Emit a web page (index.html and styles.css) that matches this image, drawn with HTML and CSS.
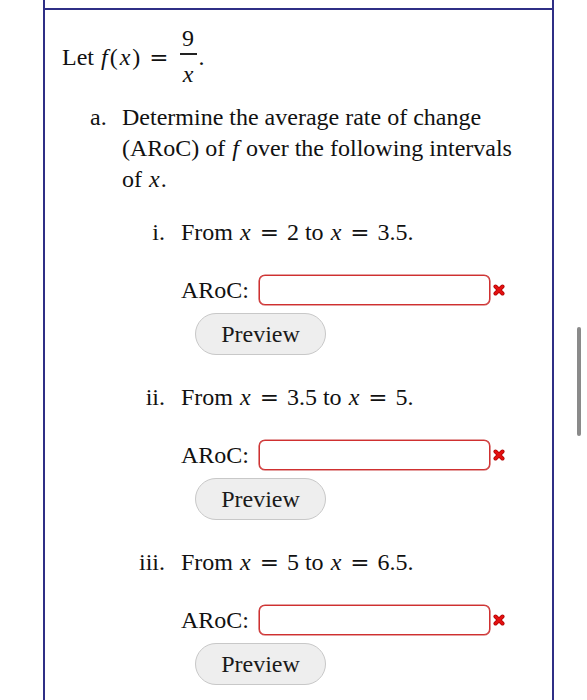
FILE: index.html
```html
<!DOCTYPE html>
<html>
<head>
<meta charset="utf-8">
<link rel="stylesheet" href="styles.css">
</head>
<body>
<div class="frame">
  <div class="strip"></div>
  <div class="content">
    <div class="intro">
      <span>Let&nbsp;</span><span class="mi">f</span><span class="mo">(</span><span class="mi">x</span><span class="mo">)</span><span class="rel">=</span><span class="frac"><span class="num">9</span><span class="bar"></span><span class="den mi">x</span></span><span>.</span>
    </div>
    <div class="part">
      <div class="label">a.</div>
      <div class="body">
        <div class="ptext">Determine the average rate of change (ARoC) of <span class="mi">f</span> over the following intervals of <span class="mi">x</span>.</div>

        <div class="item">
          <div class="iline"><span class="ilabel">i.</span><span>From&nbsp;<span class="mi">x</span><span class="rel">=</span>2 to&nbsp;<span class="mi">x</span><span class="rel">=</span>3.5.</span></div>
          <div class="answer"><span class="alabel">ARoC:</span><span class="input"></span><svg class="xmark" viewBox="0 0 12 12" width="12" height="12"><path d="M2.5 2.5 L9.5 9.5 M9.5 2.5 L2.5 9.5" stroke="#a00" stroke-width="4" stroke-linecap="round"/><path d="M2.5 2.5 L9.5 9.5 M9.5 2.5 L2.5 9.5" stroke="#e41010" stroke-width="2.6" stroke-linecap="round"/></svg></div>
          <div class="btnrow"><span class="btn">Preview</span></div>
        </div>

        <div class="item">
          <div class="iline"><span class="ilabel">ii.</span><span>From&nbsp;<span class="mi">x</span><span class="rel">=</span>3.5 to&nbsp;<span class="mi">x</span><span class="rel">=</span>5.</span></div>
          <div class="answer"><span class="alabel">ARoC:</span><span class="input"></span><svg class="xmark" viewBox="0 0 12 12" width="12" height="12"><path d="M2.5 2.5 L9.5 9.5 M9.5 2.5 L2.5 9.5" stroke="#a00" stroke-width="4" stroke-linecap="round"/><path d="M2.5 2.5 L9.5 9.5 M9.5 2.5 L2.5 9.5" stroke="#e41010" stroke-width="2.6" stroke-linecap="round"/></svg></div>
          <div class="btnrow"><span class="btn">Preview</span></div>
        </div>

        <div class="item">
          <div class="iline"><span class="ilabel">iii.</span><span>From&nbsp;<span class="mi">x</span><span class="rel">=</span>5 to&nbsp;<span class="mi">x</span><span class="rel">=</span>6.5.</span></div>
          <div class="answer"><span class="alabel">ARoC:</span><span class="input"></span><svg class="xmark" viewBox="0 0 12 12" width="12" height="12"><path d="M2.5 2.5 L9.5 9.5 M9.5 2.5 L2.5 9.5" stroke="#a00" stroke-width="4" stroke-linecap="round"/><path d="M2.5 2.5 L9.5 9.5 M9.5 2.5 L2.5 9.5" stroke="#e41010" stroke-width="2.6" stroke-linecap="round"/></svg></div>
          <div class="btnrow"><span class="btn">Preview</span></div>
        </div>
      </div>
    </div>
  </div>
</div>
<div class="scrollbar"></div>
</body>
</html>
```

FILE: styles.css
```css
html, body {
  margin: 0;
  padding: 0;
  background: #fff;
  overflow: hidden;
}
body {
  font-family: "Liberation Serif", "Times New Roman", serif;
  font-size: 24px;
  line-height: 31px;
  color: #111;
}
.frame {
  margin-left: 43px;
  width: 507px;
  height: 700px;
  border-left: 2px solid #2f2f86;
  border-right: 2px solid #2f2f86;
}
.strip {
  height: 8px;
  border-bottom: 2px solid #2f2f86;
}
.content {
  padding-left: 17px;
}
.mi {
  font-style: italic;
  padding: 0 1px;
}
.mo {
  padding: 0 1px;
}
.rel {
  font-family: "DejaVu Serif", serif;
  font-size: 23px;
  padding: 0 8px;
}
.intro {
  margin-top: 17px;
  height: 60px;
  display: flex;
  align-items: center;
  white-space: nowrap;
}
.frac {
  display: inline-flex;
  flex-direction: column;
  align-items: center;
  margin: 0 2px 0 3px;
  line-height: 26px;
  position: relative;
  top: -1px;
}
.bar {
  width: 17px;
  height: 1.5px;
  background: #222;
  margin: 2px 0 6px;
}
.part {
  margin-top: 15px;
  margin-left: 28px;
  display: flex;
}
.part .label {
  width: 32px;
  flex: none;
}
.body {
  width: 405px;
}
.item {
  margin-top: 22px;
}
.item + .item {
  margin-top: 27px;
}
.iline {
  display: flex;
  white-space: nowrap;
}
.ilabel {
  width: 43px;
  text-align: right;
  margin-right: 16px;
  flex: none;
}
.answer {
  margin-top: 27px;
  margin-left: 59px;
  height: 30px;
  display: flex;
  align-items: center;
  white-space: nowrap;
}
.alabel {
  width: 78px;
  flex: none;
}
.input {
  width: 229px;
  height: 28px;
  border: 1px solid #d03030;
  box-shadow: 0 0 0 0.6px #c44;
  border-radius: 6px;
  background: #fff;
  flex: none;
}
.xmark {
  margin-left: 3px;
  flex: none;
}
.btnrow {
  margin-top: 8px;
  margin-left: 73px;
  display: flex;
}
.btn {
  width: 129px;
  height: 40px;
  border: 1px solid #c8c8c8;
  border-radius: 21px;
  background: #eeeeee;
  color: #1a1a1a;
  display: flex;
  align-items: center;
  justify-content: center;
}
.scrollbar {
  position: absolute;
  left: 577px;
  top: 327px;
  width: 4px;
  height: 109px;
  border-radius: 2px;
  background: #8a8a8a;
}
```
